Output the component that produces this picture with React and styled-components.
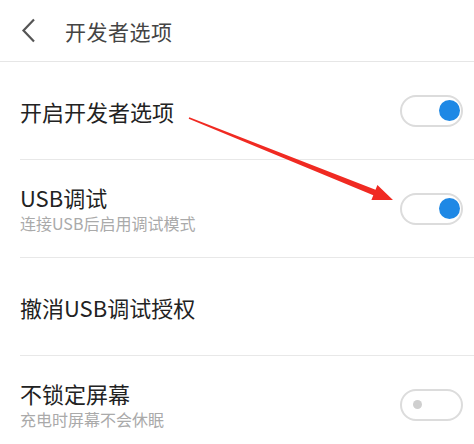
import React from "react";
import styled, { createGlobalStyle } from "styled-components";

const Global = createGlobalStyle`
    body {
        margin: 0;
        background: #fff;
        font-family: "Noto Sans CJK SC", "Noto Sans", sans-serif;
    }
`

const items = [
    { title: "开启开发者选项", on: true },
    { title: "USB调试", sub: "连接USB后启用调试模式", on: true },
    { title: "撤消USB调试授权" },
    { title: "不锁定屏幕", sub: "充电时屏幕不会休眠", on: false },
];

const App = () => {
    return (
        <Page>
            <Global />
            <Header>
                <svg width="15" height="25" viewBox="0 0 15 25">
                    <path d="M13 1.5 L2.5 12.5 L13 23.5" fill="none" stroke="#555" strokeWidth="2.2" />
                </svg>
                <HeaderTitle>开发者选项</HeaderTitle>
            </Header>
            <List>
                {items.map((it) => (
                    <Row key={it.title}>
                        <div>
                            <Title>{it.title}</Title>
                            {it.sub && <Sub>{it.sub}</Sub>}
                        </div>
                        {it.on !== undefined && (
                            <Switch>
                                <Knob $on={it.on} />
                            </Switch>
                        )}
                    </Row>
                ))}
            </List>
            <Arrow width="474" height="444" viewBox="0 0 474 444">
                <polygon
                    points="189.3,117.3 375.5,189.7 377.4,185.1 393,200 371.4,199.9 373.3,195.3 188.7,118.7"
                    fill="#f02a22"
                />
            </Arrow>
        </Page>
    )
}

const Page = styled.div`
    position: relative;
    width: 474px;
    height: 444px;
    overflow: hidden;
`

const Header = styled.div`
    height: 61px;
    display: flex;
    align-items: center;
    gap: 29px;
    padding-left: 21px;
    border-bottom: 1px solid #e6e6e6;
`

const HeaderTitle = styled.div`
    font-size: 21px;
    color: #444;
    letter-spacing: 0.5px;
`

const List = styled.div`
    margin-left: 20px;
`

const Row = styled.div`
    height: 97px;
    display: flex;
    align-items: center;
    justify-content: space-between;
    padding-right: 11px;
    border-bottom: 1px solid #e8e8e8;
`

const Title = styled.div`
    font-size: 22px;
    color: #222;
    line-height: 28px;
`

const Sub = styled.div`
    font-size: 16px;
    color: #aaa;
    line-height: 22px;
    margin-top: 1px;
`

const Switch = styled.div`
    width: 59px;
    height: 28px;
    border: 2px solid #dcdcdc;
    border-radius: 16px;
    display: flex;
    align-items: center;
`

const Knob = styled.div`
    border-radius: 50%;
    width: ${(p) => (p.$on ? "21px" : "9px")};
    height: ${(p) => (p.$on ? "21px" : "9px")};
    background: ${(p) => (p.$on ? "#1e88e5" : "#cfcfcf")};
    margin-left: ${(p) => (p.$on ? "37px" : "11px")};
`

const Arrow = styled.svg`
    position: absolute;
    left: 0;
    top: 0;
    pointer-events: none;
`

export default App;
